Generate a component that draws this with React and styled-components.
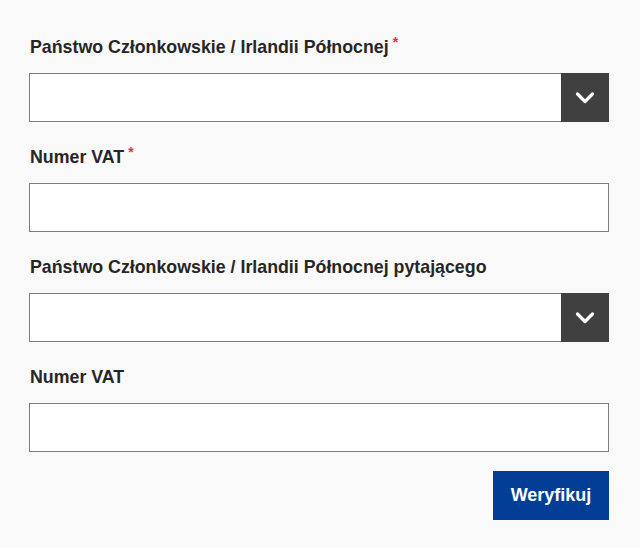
import React from "react";
import styled, { createGlobalStyle } from "styled-components";

const Global = createGlobalStyle`
  html, body { margin: 0; padding: 0; background: #f9f9f9; }
  body { font-family: "Liberation Sans", Arial, sans-serif; }
`;

const Form = styled.form`
  display: flex;
  flex-direction: column;
  gap: 25px;
  width: 580px;
  padding: 37px 0 0 29px;
`;

const Field = styled.div`
  display: flex;
  flex-direction: column;
  gap: 16px;
`;

const Label = styled.label`
  display: block;
  font-size: 17.8px;
  line-height: 20px;
  font-weight: 700;
  color: #262626;
  padding-left: 1px;
`;

const Required = styled.span`
  color: #d8344e;
  font-size: 14px;
  vertical-align: top;
  line-height: 10px;
  margin-left: 4px;
`;

const SelectWrap = styled.div`
  position: relative;
  display: flex;
  height: 49px;
  box-sizing: border-box;
  border: 1px solid #7d7d7d;
  background: #fff;
`;

const SelectBox = styled.select`
  flex: 1;
  border: none;
  background: transparent;
  appearance: none;
  font: inherit;
  outline: none;
`;

const Chevron = styled.div`
  width: 48px;
  margin: -1px -1px -1px 0;
  background: #404040;
  display: flex;
  align-items: center;
  justify-content: center;
`;

const TextInput = styled.input`
  height: 49px;
  box-sizing: border-box;
  border: 1px solid #7d7d7d;
  background: #fff;
  padding: 0 12px;
  font: inherit;
  outline: none;
`;

const Actions = styled.div`
  display: flex;
  justify-content: flex-end;
  margin-top: -6px;
`;

const Button = styled.button`
  width: 116px;
  height: 49px;
  border: none;
  background: #033e96;
  color: #fff;
  font-family: "Liberation Sans", Arial, sans-serif;
  font-size: 18px;
  font-weight: 700;
  cursor: pointer;
`;

const ChevronIcon = () => (
  <svg width="20" height="14" viewBox="0 0 20 14">
    <path d="M2.5 3 L10 10.5 L17.5 3" fill="none" stroke="#fff" strokeWidth="3.2" strokeLinecap="round" strokeLinejoin="round" />
  </svg>
);

const SelectField = ({ label, required }) => (
  <Field>
    <Label>
      {label}
      {required && <Required>*</Required>}
    </Label>
    <SelectWrap>
      <SelectBox>
        <option></option>
      </SelectBox>
      <Chevron>
        <ChevronIcon />
      </Chevron>
    </SelectWrap>
  </Field>
);

const InputField = ({ label, required }) => (
  <Field>
    <Label>
      {label}
      {required && <Required>*</Required>}
    </Label>
    <TextInput type="text" />
  </Field>
);

export default function App() {
  return (
    <>
      <Global />
      <Form onSubmit={(e) => e.preventDefault()}>
        <SelectField label="Państwo Członkowskie / Irlandii Północnej" required />
        <InputField label="Numer VAT" required />
        <SelectField label="Państwo Członkowskie / Irlandii Północnej pytającego" />
        <InputField label="Numer VAT" />
        <Actions>
          <Button type="submit">Weryfikuj</Button>
        </Actions>
      </Form>
    </>
  );
}
